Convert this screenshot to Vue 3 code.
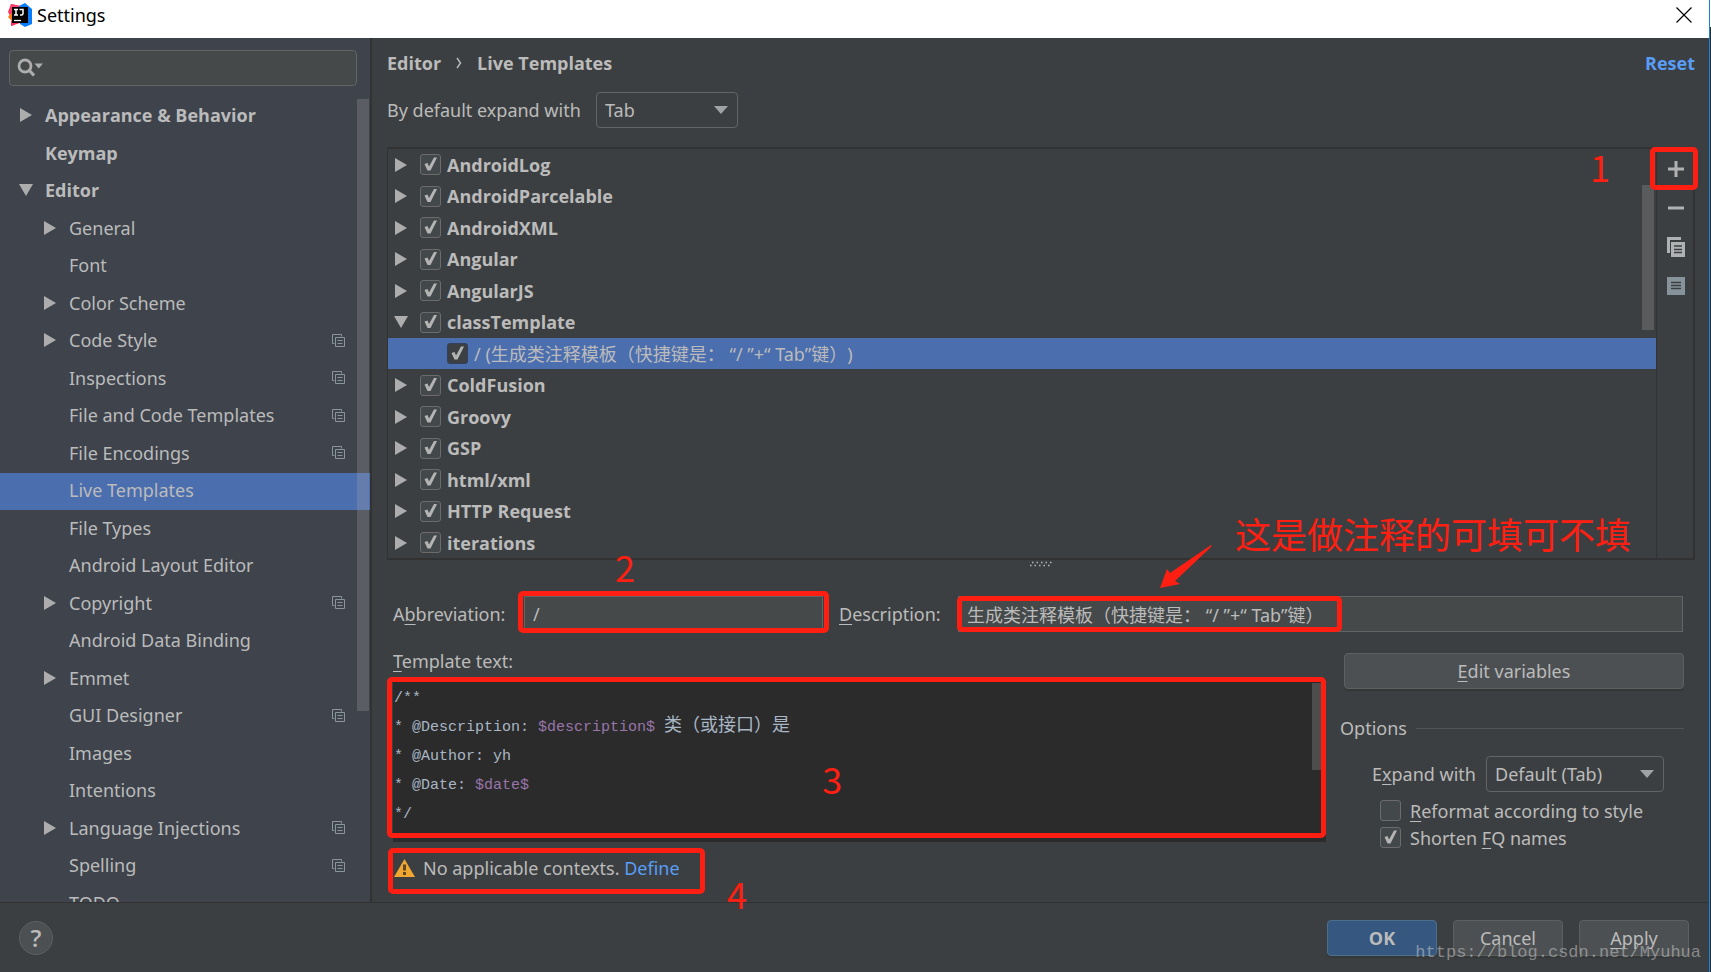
<script setup>
import { ref } from 'vue'

const tree = [
  { label: 'Appearance & Behavior', level: 0, arrow: 'right' },
  { label: 'Keymap', level: 0 },
  { label: 'Editor', level: 0, arrow: 'down' },
  { label: 'General', level: 1, arrow: 'right' },
  { label: 'Font', level: 1 },
  { label: 'Color Scheme', level: 1, arrow: 'right' },
  { label: 'Code Style', level: 1, arrow: 'right', shared: true },
  { label: 'Inspections', level: 1, shared: true },
  { label: 'File and Code Templates', level: 1, shared: true },
  { label: 'File Encodings', level: 1, shared: true },
  { label: 'Live Templates', level: 1, selected: true },
  { label: 'File Types', level: 1 },
  { label: 'Android Layout Editor', level: 1 },
  { label: 'Copyright', level: 1, arrow: 'right', shared: true },
  { label: 'Android Data Binding', level: 1 },
  { label: 'Emmet', level: 1, arrow: 'right' },
  { label: 'GUI Designer', level: 1, shared: true },
  { label: 'Images', level: 1 },
  { label: 'Intentions', level: 1 },
  { label: 'Language Injections', level: 1, arrow: 'right', shared: true },
  { label: 'Spelling', level: 1, shared: true },
  { label: 'TODO', level: 1 },
]

const templates = ref([
  { label: 'AndroidLog', on: true },
  { label: 'AndroidParcelable', on: true },
  { label: 'AndroidXML', on: true },
  { label: 'Angular', on: true },
  { label: 'AngularJS', on: true },
  { label: 'classTemplate', on: true, open: true },
  { label: '/ (生成类注释模板（快捷键是： “/ ”+“ Tab”键）)', on: true, child: true },
  { label: 'ColdFusion', on: true },
  { label: 'Groovy', on: true },
  { label: 'GSP', on: true },
  { label: 'html/xml', on: true },
  { label: 'HTTP Request', on: true },
  { label: 'iterations', on: true },
])

const search = ref('')
const abbreviation = ref('/')
const description = ref('生成类注释模板（快捷键是： “/ ”+“ Tab”键）')
const reformat = ref(false)
const shorten = ref(true)
</script>

<template>
  <div class="screen">
    <div class="window">
      <header class="titlebar">
        <svg class="logo" width="24" height="24" viewBox="0 0 24 24">
          <path d="M3 1 L13 3 L6 22 L3 23 L4 16 L0 9 Z" fill="#fe315d" />
          <path d="M0 14 L3 10 L5 12 L5 19 Z" fill="#f97a12" />
          <path d="M11 3 L17 0 L24 6 L24 21 L17 24 L12 21 Z" fill="#087cfa" />
          <path d="M3 1 L12 3 L8 6 L2 10 Z" fill="#fc3f6d" />
          <path d="M3 23 L12 20 L9 17 L3 18 Z" fill="#fe315d" />
          <rect x="4" y="4" width="16" height="16" fill="#000" />
          <path d="M6 6.5h4M8 6.5v5.5M6 12h4M11.500 6.500h3.500v4q0 1.500-1.500 1.500h-1.500" fill="none" stroke="#fff" stroke-width="1.500" />
          <path d="M6 17.500h7" stroke="#fff" stroke-width="1.300" />
        </svg>
        <h1 class="title">Settings</h1>
        <button class="close" type="button" aria-label="Close">
          <svg width="16" height="16" viewBox="0 0 16 16"><path d="M.5 .5 L15.500 15.500 M15.500 .5 L.5 15.500" stroke="#000" stroke-width="1.200" /></svg>
        </button>
      </header>

      <div class="body">
        <aside class="sidebar">
          <div class="search">
            <svg width="28" height="20" viewBox="0 0 28 20">
              <circle cx="8" cy="8" r="6" fill="none" stroke="#adadad" stroke-width="2.800" />
              <path d="M12 12 L17 17.500" stroke="#adadad" stroke-width="3.200" />
              <path d="M17.500 5.500 H26 L21.700 10.500 Z" fill="#adadad" />
            </svg>
            <input v-model="search" class="search-input" type="text" aria-label="Search settings" />
          </div>
          <nav class="tree">
            <a
              v-for="item in tree"
              :key="item.label"
              href="#"
              class="node"
              :class="['level-' + item.level, { selected: item.selected }]"
            >
              <span class="arrow-slot">
                <svg v-if="item.arrow === 'right'" width="12" height="14" viewBox="0 0 12 14"><path d="M0 0 L12 7 L0 14 Z" fill="#adadad" /></svg>
                <svg v-else-if="item.arrow === 'down'" class="down" width="14" height="12" viewBox="0 0 14 12"><path d="M0 0 H14 L7 12 Z" fill="#adadad" /></svg>
              </span>
              <span class="node-label">{{ item.label }}</span>
              <svg v-if="item.shared" width="13" height="13" viewBox="0 0 13 13" fill="none" stroke="#8a949c">
                <path d="M2.500 9.500 H.5 V.5 H9.500 V2.500" />
                <path d="M3.500 3.500 H12.500 V12.500 H3.500 Z M5.500 6.500 H10.500 M5.500 9.500 H10.500" />
              </svg>
            </a>
            <div class="tree-thumb"></div>
          </nav>
        </aside>

        <main class="main">
          <div class="crumbs">
            <span>Editor</span>
            <svg width="6" height="12" viewBox="0 0 6 12"><path d="M1 1 L4.500 6 L1 11" fill="none" stroke="#bbb" stroke-width="1.400" /></svg>
            <span>Live Templates</span>
            <a class="reset" href="#">Reset</a>
          </div>

          <div class="default-expand">
            <label for="default-key">By default expand with</label>
            <span class="combo combo-small">
              <select id="default-key"><option>Tab</option><option>Enter</option><option>Space</option></select>
              <svg width="14" height="8" viewBox="0 0 14 8"><path d="M0 0 H14 L7 8 Z" fill="#a0a3a6" /></svg>
            </span>
          </div>

          <section class="templates">
            <div class="rows">
              <div v-for="(t, i) in templates" :key="t.label" class="row" :class="{ child: t.child }">
                <span v-if="!t.child" class="arrow-slot">
                  <svg v-if="t.open" class="down" width="14" height="12" viewBox="0 0 14 12"><path d="M0 0 H14 L7 12 Z" fill="#adadad" /></svg>
                  <svg v-else width="12" height="14" viewBox="0 0 12 14"><path d="M0 0 L12 7 L0 14 Z" fill="#adadad" /></svg>
                </span>
                <input :id="'tpl-' + i" v-model="t.on" class="check" type="checkbox" />
                <label :for="'tpl-' + i">{{ t.label }}</label>
              </div>
              <div class="rows-thumb"></div>
            </div>
            <div class="toolbar">
              <button type="button" aria-label="Add">
                <svg width="16" height="16" viewBox="0 0 16 16"><path d="M8 0 V16 M0 8 H16" stroke="#afb1b3" stroke-width="3" /></svg>
                <span class="mark mark-add"></span>
                <span class="digit digit-1">1</span>
              </button>
              <button type="button" aria-label="Remove">
                <svg width="16" height="16" viewBox="0 0 16 16"><path d="M0 8 H16" stroke="#afb1b3" stroke-width="3" /></svg>
              </button>
              <button type="button" aria-label="Duplicate">
                <svg width="18" height="20" viewBox="0 0 18 20">
                  <path d="M0 0 H14 V3 H3 V16 H0 Z" fill="#afb1b3" />
                  <path d="M4 5 H18 V20 H4 Z" fill="#afb1b3" />
                  <path d="M7 9 H15 M7 12.500 H15 M7 15.500 H15" stroke="#3c3f41" stroke-width="1.300" />
                </svg>
              </button>
              <button type="button" aria-label="Restore">
                <svg width="18" height="18" viewBox="0 0 18 18">
                  <path d="M0 0 H18 V18 H0 Z" fill="#87939a" />
                  <path d="M4 5.500 H14 M4 8.500 H14 M4 11.500 H14" stroke="#3c3f41" stroke-width="1.300" />
                </svg>
              </button>
            </div>
          </section>

          <div class="grip">
            <svg width="24" height="7" viewBox="0 0 24 7" stroke="#b5b5b5" stroke-width="1.500">
              <path d="M3 1.500h1.500M7.500 1.500h1.500M12 1.500h1.500M16.500 1.500h1.500M21 1.500h1.500M1 4.500h1.500M5.500 4.500h1.500M10 4.500h1.500M14.500 4.500h1.500M19 4.500h1.500" />
            </svg>
          </div>

          <div class="fields">
            <label class="label-abbr" for="abbr">A<u>b</u>breviation:</label>
            <div class="field field-abbr">
              <input id="abbr" v-model="abbreviation" type="text" />
              <span class="mark mark-abbr"></span>
              <span class="digit digit-2">2</span>
            </div>
            <label class="label-desc" for="desc"><u>D</u>escription:</label>
            <div class="field field-desc">
              <input id="desc" v-model="description" type="text" />
              <span class="mark mark-desc"></span>
              <svg class="pointer" width="52" height="44" viewBox="0 0 52 44"><path d="M0 43 L7 24 L10 28 L51 0 Q52 0 51 2 L15 36 L20 39 Z" fill="#ff1f12" /></svg>
              <span class="note">这是做注释的可填可不填</span>
            </div>
          </div>

          <div class="lower">
            <div class="left">
              <div id="tt" class="template-label"><u>T</u>emplate text:</div>
              <div class="code-wrap">
                <div class="code" contenteditable="true" role="textbox" aria-multiline="true" aria-labelledby="tt" spellcheck="false">
                  <div>/**</div>
                  <div>* @Description: <span class="var">$description$</span> <span class="cjk">类（或接口）是</span></div>
                  <div>* @Author: yh</div>
                  <div>* @Date: <span class="var">$date$</span></div>
                  <div>*/</div>
                </div>
                <div class="code-thumb"></div>
                <span class="mark mark-code"></span>
                <span class="digit digit-3">3</span>
              </div>
              <div class="context">
                <svg width="21" height="18" viewBox="0 0 21 18">
                  <path d="M10.500 0 L21 18 H0 Z" fill="#f0a732" />
                  <path d="M9 5.500 H12 V11.500 H9 Z M9 13 H12 V16 H9 Z" fill="#5d4a24" />
                </svg>
                <span>No applicable contexts. <a href="#">Define</a></span>
                <span class="mark mark-context"></span>
                <span class="digit digit-4">4</span>
              </div>
            </div>

            <div class="right">
              <button class="btn edit-vars" type="button"><span><u>E</u>dit variables</span></button>
              <div class="legend"><span>Options</span></div>
              <div class="expand-with">
                <label for="expand-key">E<u>x</u>pand with</label>
                <span class="combo combo-wide">
                  <select id="expand-key"><option>Default (Tab)</option><option>Enter</option></select>
                  <svg width="14" height="8" viewBox="0 0 14 8"><path d="M0 0 H14 L7 8 Z" fill="#a0a3a6" /></svg>
                </span>
              </div>
              <div class="option">
                <input id="reformat" v-model="reformat" class="check" type="checkbox" />
                <label for="reformat"><u>R</u>eformat according to style</label>
              </div>
              <div class="option">
                <input id="shorten" v-model="shorten" class="check" type="checkbox" />
                <label for="shorten">Shorten <u>F</u>Q names</label>
              </div>
            </div>
          </div>
        </main>
      </div>

      <footer class="footer">
        <button class="help" type="button" aria-label="Help">?</button>
        <button class="btn primary" type="button">OK</button>
        <button class="btn" type="button">Cancel</button>
        <button class="btn" type="button"><span><u>A</u>pply</span></button>
        <span class="watermark">https://blog.csdn.net/Myuhua</span>
      </footer>
    </div>
    <div class="desktop-edge"></div>
  </div>
</template>

<style>
body {
  margin: 0;
  overflow: hidden;
}
</style>

<style scoped>
* {
  box-sizing: border-box;
}
.screen {
  display: flex;
  height: 100vh;
  color: #bbbbbb;
  font: 18px/26px "Noto Sans", "Noto Sans CJK SC", sans-serif;
  text-spacing-trim: space-all;
}
.screen svg {
  display: block;
  flex: none;
}
.window {
  flex: 1;
  min-width: 0;
  display: flex;
  flex-direction: column;
  background: #3c3f41;
  border-right: 1px solid #1883d7;
}
.desktop-edge {
  width: 1px;
  background: linear-gradient(#ffffff 27px, #2b2b2b 27px);
}
button,
input,
select {
  font: inherit;
  color: inherit;
  margin: 0;
}
button {
  padding: 0;
  border: 0;
  background: none;
}
a {
  color: #589df6;
  text-decoration: none;
}
u {
  text-underline-offset: 3px;
  text-decoration-thickness: 1px;
}

.titlebar {
  flex: none;
  height: 38px;
  padding: 0 17px 8px 8px;
  display: flex;
  align-items: center;
  background: #ffffff;
  color: #000000;
}
.title {
  margin: 0 auto 0 5px;
  font-size: 18px;
  font-weight: 400;
}

.body {
  flex: 1;
  min-height: 0;
  display: flex;
  border-bottom: 1px solid #323232;
}
.sidebar {
  flex: none;
  width: 372px;
  display: flex;
  flex-direction: column;
  overflow: hidden;
  background: #3e434c;
  border-right: 2px solid #323232;
}
.search {
  flex: none;
  display: flex;
  align-items: center;
  height: 36px;
  margin: 12px 13px 12px 9px;
  padding: 0 7px;
  background: #45494a;
  border: 1px solid #646464;
  border-radius: 4px;
}
.search-input {
  flex: 1;
  min-width: 0;
  border: 0;
  outline: 0;
  background: none;
}
.tree {
  position: relative;
  flex: 1;
  min-height: 0;
  overflow: hidden;
}
.node {
  display: flex;
  align-items: center;
  height: 38px;
  padding-right: 25px;
  padding-bottom: 3px;
  color: #bbbbbb;
}
.node:nth-child(odd) {
  height: 37px;
}
.level-0 {
  padding-left: 20px;
  font-family: "Open Sans", sans-serif;
  font-weight: 700;
}
.level-1 {
  padding-left: 44px;
}
.arrow-slot {
  flex: none;
  width: 25px;
}
.down {
  margin-left: -1px;
}
.node-label {
  flex: 1;
  white-space: nowrap;
}
.selected {
  background: #4b6eaf;
}
.tree-thumb {
  position: absolute;
  top: 1px;
  right: 1px;
  width: 12px;
  height: 612px;
  background: rgba(166, 166, 166, 0.28);
}

.main {
  flex: 1;
  min-width: 0;
  padding: 0 14px 0 15px;
}
.crumbs {
  display: flex;
  align-items: center;
  height: 50px;
  gap: 15px;
  font-family: "Open Sans", sans-serif;
  font-weight: 700;
}
.reset {
  margin-left: auto;
}
.default-expand {
  display: flex;
  align-items: center;
  height: 36px;
  margin: 4px 0 19px;
}
.default-expand label {
  width: 209px;
  white-space: nowrap;
}
.combo {
  position: relative;
  height: 36px;
}
.combo-small {
  width: 142px;
}
.combo-wide {
  width: 178px;
}
.combo select {
  width: 100%;
  height: 100%;
  padding: 0 30px 0 8px;
  appearance: none;
  background: #3c3f41;
  border: 1px solid #646464;
  border-radius: 4px;
}
.combo svg {
  position: absolute;
  top: 14px;
  right: 10px;
}

.templates {
  display: flex;
  border: 2px solid #323232;
  border-left-width: 1px;
}
.rows {
  position: relative;
  flex: 1;
  min-width: 0;
}
.row {
  display: flex;
  align-items: center;
  height: 32px;
  padding-left: 7px;
  font-family: "Open Sans", sans-serif;
  font-weight: 700;
}
.row:nth-child(odd) {
  height: 31px;
}
.row label {
  margin-left: 6px;
  white-space: nowrap;
}
.row.child {
  padding-left: 59px;
  font-family: "Noto Sans", "Noto Sans CJK SC", sans-serif;
  font-weight: 400;
  background: #4b6eaf;
}
.rows-thumb {
  position: absolute;
  top: 36px;
  right: 2px;
  width: 12px;
  height: 145px;
  background: #595b5d;
}
.check {
  flex: none;
  width: 21px;
  height: 21px;
  appearance: none;
  background: #43494a;
  border: 1px solid #6b6b6b;
  border-radius: 3px;
}
.check:checked::before {
  content: "";
  display: block;
  width: 19px;
  height: 19px;
  background: #b4b4b4;
  clip-path: polygon(3.5px 9px, 6.5px 8px, 8px 11.5px, 13px 2.5px, 16px 2.5px, 9.5px 15.5px, 6.5px 15.5px);
}
.child .check {
  border-color: #32405c;
  background: #3c4042;
}
.toolbar {
  flex: none;
  width: 37px;
  border-left: 1px solid #323232;
}
.toolbar button {
  position: relative;
  width: 100%;
  height: 39px;
  padding-left: 2px;
  display: grid;
  place-items: center;
}

.grip {
  height: 36px;
  padding-top: 1px;
  display: flex;
  justify-content: center;
}
.fields {
  display: flex;
  align-items: center;
  height: 36px;
  padding: 0 12px 0 6px;
}
.fields label {
  flex: none;
  white-space: nowrap;
}
.label-abbr {
  width: 131px;
}
.label-desc {
  width: 119px;
  margin-left: 16px;
}
.field {
  position: relative;
  height: 36px;
}
.field input {
  width: 100%;
  height: 36px;
  padding: 0 8px;
  background: #45494a;
  border: 1px solid #646464;
  outline: 0;
}
.field-abbr {
  flex: none;
  width: 299px;
}
.field-desc {
  flex: 1;
  min-width: 0;
}

.lower {
  display: grid;
  grid-template-columns: minmax(0, 1fr) 340px;
  column-gap: 18px;
  padding: 0 11px 0 6px;
}
.template-label {
  margin: 16px 0 7px;
}
.code-wrap {
  position: relative;
}
.code {
  min-height: 161px;
  padding: 3px 0 0 1px;
  background: #2b2b2b;
  color: #a9b7c6;
  font: 15px/29px "Liberation Mono", "Noto Sans CJK SC", monospace;
  outline: 0;
}
.var {
  color: #9876aa;
}
.cjk {
  font-size: 18px;
  line-height: 26px;
}
.code-thumb {
  position: absolute;
  top: 2px;
  right: 4px;
  width: 10px;
  height: 87px;
  background: #4d4d4d;
}
.context {
  position: relative;
  display: flex;
  align-items: center;
  gap: 8px;
  margin-top: 13px;
  padding-left: 1px;
}

.btn {
  width: 110px;
  height: 36px;
  background: #4c5052;
  border: 1px solid #5e6060;
  border-radius: 4px;
  box-shadow: 0 2px 1px rgba(40, 40, 40, 0.3);
}
.edit-vars {
  display: block;
  width: 100%;
  margin-top: 21px;
}
.legend {
  display: flex;
  align-items: center;
  gap: 9px;
  height: 24px;
  margin: 27px 0 16px -4px;
}
.legend::after {
  content: "";
  flex: 1;
  height: 1px;
  background: #515456;
}
.expand-with {
  display: flex;
  align-items: center;
  justify-content: flex-end;
  gap: 10px;
  margin: 0 20px 8px 0;
}
.option {
  display: flex;
  align-items: center;
  gap: 9px;
  height: 21px;
  margin: 0 0 6px 36px;
  white-space: nowrap;
}

.footer {
  position: relative;
  flex: none;
  display: flex;
  align-items: center;
  gap: 16px;
  height: 69px;
  padding: 0 20px 0 19px;
}
.help {
  width: 34px;
  height: 34px;
  margin-right: auto;
  background: #4c5052;
  border: 1px solid #5e6060;
  border-radius: 50%;
  font-family: "Open Sans", sans-serif;
  font-size: 24px;
  font-weight: 600;
}
.primary {
  background: #365880;
  border-color: #4c708c;
  font-family: "Open Sans", sans-serif;
  font-weight: 700;
}
.watermark {
  position: absolute;
  right: 8px;
  bottom: 6px;
  color: rgba(200, 200, 200, 0.55);
  font: 17px/26px "Liberation Mono", monospace;
  pointer-events: none;
}

/* Red annotations laid over the dialog */
.mark {
  position: absolute;
  border: 5px solid #ff1f12;
  border-radius: 5px;
  pointer-events: none;
}
.mark-add {
  inset: -2px -5px -2px -7px;
}
.mark-abbr {
  inset: -5px -6px -1px -6px;
}
.mark-desc {
  top: 0;
  left: -1px;
  width: 385px;
  height: 36px;
}
.mark-code {
  inset: -4px 0 4px -6px;
}
.mark-context {
  top: -7px;
  left: -5px;
  width: 317px;
  height: 46px;
}
.digit,
.note {
  position: absolute;
  color: #ff1f12;
  font: 400 36px/40px "Noto Sans CJK SC", sans-serif;
  white-space: nowrap;
  pointer-events: none;
}
.digit-1 {
  top: -3px;
  right: 83px;
}
.digit-2 {
  top: -50px;
  left: 91px;
}
.digit-3 {
  top: 77px;
  left: 46%;
}
.digit-4 {
  top: 18px;
  left: 334px;
}
.pointer {
  position: absolute;
  top: -51px;
  left: 202px;
}
.note {
  top: -83px;
  left: 277px;
}
</style>
